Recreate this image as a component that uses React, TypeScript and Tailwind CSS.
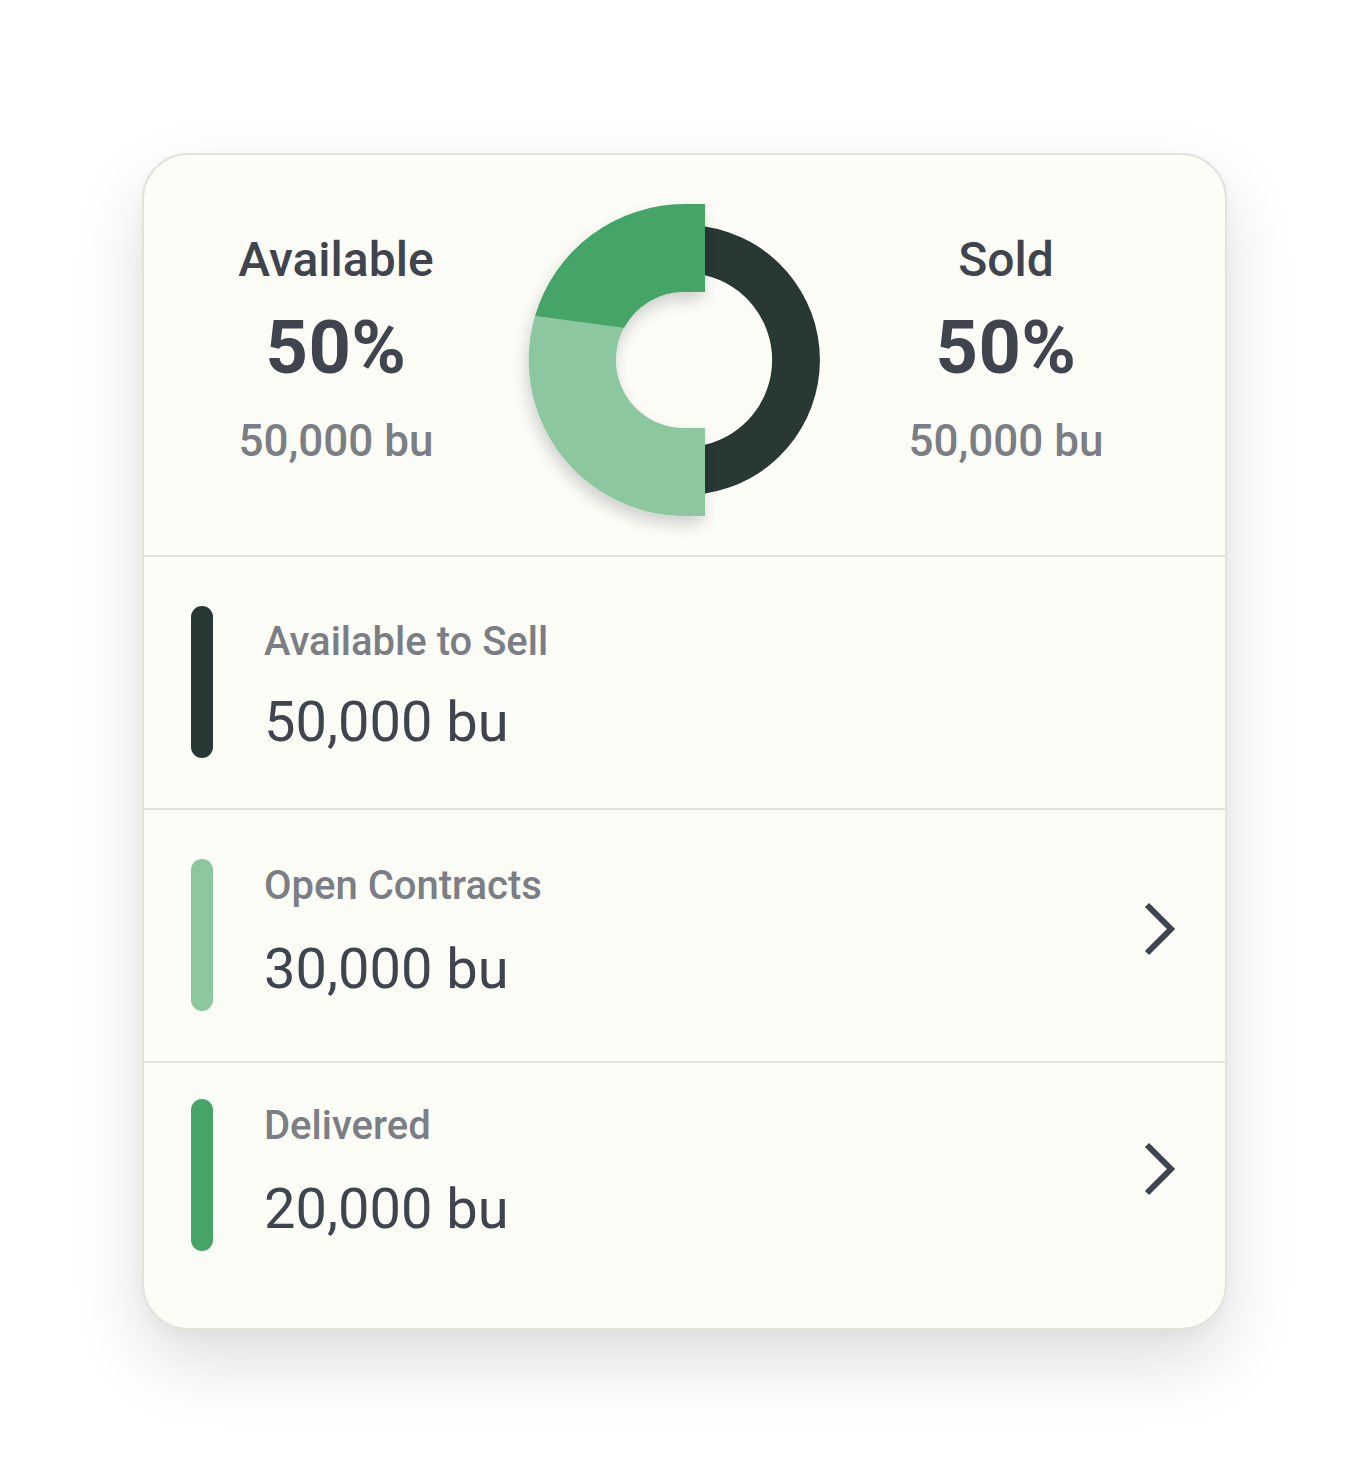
import React from "react";

type Row = {
  label: string;
  value: string;
  color: string;
  link?: boolean;
};

const rows: Row[] = [
  { label: "Available to Sell", value: "50,000 bu", color: "bg-[#283833]" },
  { label: "Open Contracts", value: "30,000 bu", color: "bg-[#8dc7a0]", link: true },
  { label: "Delivered", value: "20,000 bu", color: "bg-[#45a467]", link: true },
];

const Chevron = () => (
  <svg width="40" height="60" viewBox="0 0 40 60" fill="none">
    <path
      d="M7 6 L31 30 L7 54"
      stroke="#3f4550"
      strokeWidth="6"
      strokeLinejoin="miter"
      strokeLinecap="butt"
    />
  </svg>
);

const Donut = () => (
  <svg width="340" height="340" viewBox="0 0 340 340" className="overflow-visible">
    <defs>
      <filter id="soft" x="-30%" y="-30%" width="160%" height="160%">
        <feDropShadow dx="-2" dy="8" stdDeviation="8" floodColor="#000" floodOpacity="0.18" />
      </filter>
    </defs>
    <path
      d="M190 36.5 A135 135 0 0 1 190 303.5 L190 254.7 A87 87 0 0 0 190 85.3 Z"
      fill="#283833"
    />
    <g filter="url(#soft)">
      <path
        d="M20 126 A156 156 0 0 0 170 326 L190 326 L190 238 L170 238 A68 68 0 0 1 109 138 Z"
        fill="#8dc7a0"
      />
      <path
        d="M20 126 A156 156 0 0 1 170 14 L190 14 L190 102 L170 102 A68 68 0 0 0 109 138 Z"
        fill="#45a467"
      />
    </g>
  </svg>
);

const Stat = ({ title, pct, amount }: { title: string; pct: string; amount: string }) => (
  <div className="flex w-[300px] flex-col items-center pt-[77px] text-center">
    <div className="text-[48px] font-medium leading-[56px] text-[#3f444e]">{title}</div>
    <div className="mt-[20px] text-[74px] font-bold leading-[80px] tracking-[0.5px] text-[#3f444e]">{pct}</div>
    <div className="mt-[28px] text-[44px] font-medium leading-[50px] text-[#7b7e84]">{amount}</div>
  </div>
);

export default function App() {
  return (
    <div className="min-h-screen bg-white pl-[142px] pt-[153px] font-['Roboto',sans-serif]">
      <div className="w-[1085px] overflow-hidden rounded-[46px] border-2 border-[#e3e3dc] bg-[#fcfdf7] shadow-[0_32px_70px_rgba(0,0,0,0.13),0_6px_16px_rgba(0,0,0,0.03)]">
        <div className="flex h-[402px] items-start border-b-2 border-[#e3e3dc]">
          <div className="ml-[42px]">
            <Stat title="Available" pct="50%" amount="50,000 bu" />
          </div>
          <div className="ml-[29px] mt-[35px]">
            <Donut />
          </div>
          <div className="ml-[1px]">
            <Stat title="Sold" pct="50%" amount="50,000 bu" />
          </div>
        </div>

        {rows.map((row, i) => (
          <div
            key={row.label}
            className={
              i === 0
                ? "flex h-[253px] items-start border-b-2 border-[#e3e3dc] pl-[47px] pt-[49px]"
                : i === 1
                ? "flex h-[253px] items-start border-b-2 border-[#e3e3dc] pl-[47px] pt-[49px]"
                : "flex h-[265px] items-start pl-[47px] pt-[36px]"
            }
          >
            <div className={`h-[152px] w-[22px] rounded-full ${row.color}`} />
            <div className={i === 0 ? "ml-[51px] pt-[12px]" : "ml-[51px] pt-[3px]"}>
              <div className="text-[40px] font-medium leading-[48px] text-[#7b7e84]">{row.label}</div>
              <div
                className={
                  i === 0
                    ? "mt-[24px] text-[56px] leading-[64px] text-[#3f444e]"
                    : "mt-[27px] text-[56px] leading-[64px] text-[#3f444e]"
                }
              >
                {row.value}
              </div>
            </div>
            {row.link && (
              <div className="ml-auto mr-[45px] mt-[40px]">
                <Chevron />
              </div>
            )}
          </div>
        ))}
      </div>
    </div>
  );
}
